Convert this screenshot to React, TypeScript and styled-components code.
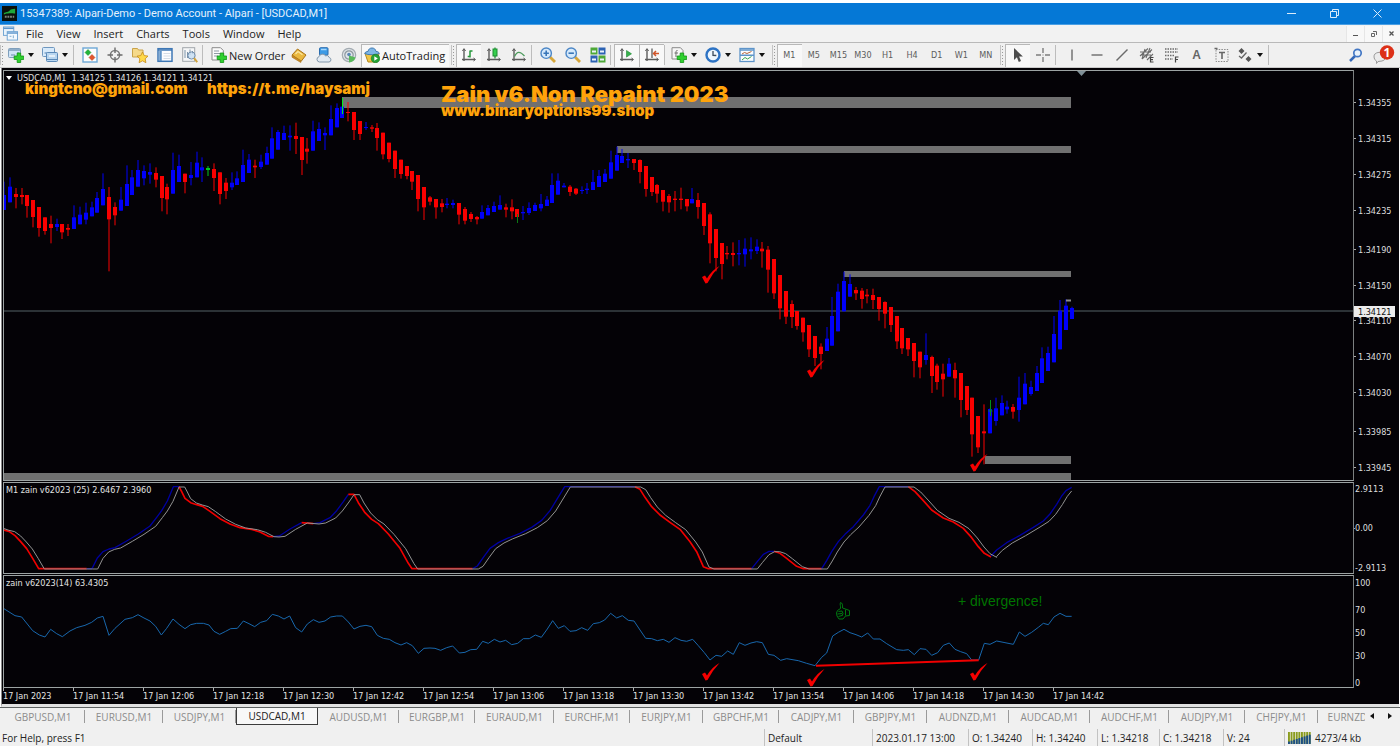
import React from "react";
import styled, { createGlobalStyle, css } from "styled-components";

const GlobalStyle = createGlobalStyle`
  * { box-sizing: border-box; }
  body { margin: 0; background: #ffffff; }
  button { font: inherit; color: inherit; border: 0; padding: 0; background: none; }
`;

const uiFont = `"Open Sans", "Noto Sans", sans-serif`;
const chartFont = `"DejaVu Sans Condensed", "Open Sans", sans-serif`;

const Window = styled.div`
  display: flex;
  flex-direction: column;
  padding-top: 3px;
  font-family: ${uiFont};
  font-size: 10px;
  color: #222222;
  overflow: hidden;
`;

const TitleBar = styled.header`
  display: flex;
  align-items: center;
  height: 22px;
  padding: 0 1px 0 2px;
  background: #0578d6;
  border-bottom: 1px solid #4a9fe4;
  color: #e4f1fc;
`;

const AppTitle = styled.h1`
  flex: 1;
  margin: 0 0 0 3px;
  font-family: Roboto, sans-serif;
  font-size: 11px;
  line-height: 14px;
  font-weight: 400;
  white-space: nowrap;
`;

const CaptionButton = styled.button`
  display: grid;
  place-items: center;
  width: 43px;
  height: 20px;
`;

const MenuBar = styled.nav`
  display: flex;
  align-items: center;
  height: 18px;
  padding-left: 3px;
  background: #f2f2f2;
  border-bottom: 1px solid #b9b9b9;
`;

const Menus = styled.div`
  display: flex;
  gap: 13px;
  padding-left: 8px;
`;

const MenuItem = styled.button`
  font-size: 11px;
  line-height: 16px;
`;

const Spacer = styled.div`
  flex: 1;
`;

const MdiButton = styled.button`
  display: grid;
  place-items: center;
  width: 18px;
  height: 16px;
  background: #f8f8f8;
  border-left: 1px solid #e6e6e6;
`;

const ToolBar = styled.div`
  display: flex;
  align-items: center;
  height: 25px;
  background: #f0f0f0;
  border-bottom: 1px solid #c9c9c9;
`;

const ToolGroup = styled.div`
  display: flex;
  align-items: center;
  height: 24px;
  padding-right: 2px;
`;

const Grip = styled.span`
  width: 5px;
  height: 20px;
  background: radial-gradient(circle, #9a9a9a 1px, transparent 1px) 0 0 / 3px 3px;
  border-left: 1px solid #c4c4c4;
`;

const Divider = styled.span`
  width: 4px;
  height: 20px;
  border-left: 1px solid #bcbcbc;
`;

const ToolButton = styled.button<{ $width?: number; $pressed?: boolean; $left?: number }>`
  display: flex;
  align-items: center;
  justify-content: ${(p) => (p.$left === undefined ? "center" : "flex-start")};
  gap: 2px;
  width: ${(p) => p.$width ?? 25}px;
  height: 23px;
  padding-left: ${(p) => p.$left ?? 0}px;
  font-size: 11px;
  white-space: nowrap;
  ${(p) =>
    p.$pressed &&
    css`
      background: #f8f8f8;
      box-shadow: inset 1px 1px 0 #b8b8b8;
    `}
`;

const Timeframes = styled.div`
  display: flex;
  width: 221px;
`;

const TimeframeButton = styled.button<{ $pressed?: boolean }>`
  flex: 1;
  height: 23px;
  font-family: ${chartFont};
  font-size: 9px;
  color: #5c5c5c;
  ${(p) =>
    p.$pressed &&
    css`
      background: #f8f8f8;
      box-shadow: inset 1px 1px 0 #b8b8b8;
    `}
`;

const LetterA = styled.span`
  font: 700 12px/14px "Liberation Sans", Arial, sans-serif;
  color: #666666;
`;

const ChartFrame = styled.main`
  display: flex;
  flex-direction: column;
  gap: 1px;
  margin: 0 1px;
  padding-top: 2px;
  background: #040206;
  border-left: 1px solid #8c8c8c;
  border-bottom: 3px solid #e2e2e2;
  font-family: ${chartFont};
  font-size: 9px;
  color: #e2e2e2;
`;

const Pane = styled.section<{ $height: number }>`
  display: flex;
  height: ${(p) => p.$height}px;
  padding-left: 1px;
`;

const Plot = styled.div`
  position: relative;
  flex: 1;
  min-width: 0;
  border: 1px solid #9da3a3;
  border-right-color: #7c8080;
  overflow: hidden;
`;

const Axis = styled.div`
  width: 45px;
`;

const Drawing = styled.svg`
  display: block;
  width: 100%;
  height: 100%;
  overflow: visible;
`;

const Legend = styled.div`
  position: absolute;
  top: 2px;
  left: 2px;
  display: flex;
  align-items: center;
  gap: 5px;
  line-height: 10px;
  white-space: pre;
`;

const Note = styled.div<{ $left: number; $top: number; $size: number }>`
  position: absolute;
  left: ${(p) => p.$left}px;
  top: ${(p) => p.$top}px;
  font: 900 ${(p) => p.$size}px/16px "Inter", "DejaVu Sans", sans-serif;
  color: #ffa30a;
  white-space: nowrap;
`;

const Signal = styled.div`
  position: absolute;
  left: 954px;
  top: 17px;
  font: 14px/16px "Liberation Sans", Arial, sans-serif;
  color: #007400;
  white-space: nowrap;
`;

const TimeAxis = styled.div`
  display: flex;
  height: 16px;
  margin-top: -1px;
  padding-left: 1px;
`;

const TimeLabel = styled.time`
  flex: 0 0 70px;
  line-height: 16px;
  white-space: nowrap;
  background: linear-gradient(#b0b0b0, #b0b0b0) 0 0 / 1px 3px no-repeat;
`;

const TabStrip = styled.div`
  display: flex;
  align-items: flex-start;
  height: 22px;
  background: #f0f0f0;
  border-top: 1px solid #5d6161;
`;

const Tabs = styled.div`
  display: flex;
  flex: 1;
  min-width: 0;
  overflow: hidden;
  padding-left: 1px;
`;

const Tab = styled.button<{ $width: number; $active?: boolean }>`
  flex: 0 0 ${(p) => p.$width}px;
  height: 17px;
  line-height: 16px;
  color: ${(p) => (p.$active ? "#222222" : "#8c8c8c")};
  font-size: 10px;
  white-space: nowrap;
  background: linear-gradient(#9a9a9a, #9a9a9a) 100% 2px / 1px 13px no-repeat;
  ${(p) =>
    p.$active &&
    css`
      background: #f8f8f8;
      border: 1px solid #3c3c3c;
      border-top: 0;
    `}
`;

const TabScroll = styled.div`
  display: flex;
  align-items: center;
  gap: 14px;
  height: 15px;
  padding: 0 8px 0 5px;
`;

const ScrollButton = styled.button`
  display: block;
  line-height: 0;
`;

const StatusBar = styled.footer`
  display: flex;
  align-items: center;
  height: 17px;
  background: #f0f0f0;
`;

const StatusText = styled.span`
  flex: 1;
  padding-left: 2px;
  white-space: nowrap;
`;

const StatusCell = styled.span<{ $width: number }>`
  display: flex;
  align-items: center;
  gap: 4px;
  width: ${(p) => p.$width}px;
  height: 17px;
  padding-left: 3px;
  border-left: 1px solid #c2c2c2;
  white-space: nowrap;
`;

/* ---------- icons ---------- */

const Icon = ({ children, size = 16 }: { children: React.ReactNode; size?: number }) => (
  <svg width={size} height={size} viewBox="0 0 16 16" fill="none" aria-hidden="true">
    {children}
  </svg>
);

const Caret = () => (
  <svg width="8" height="4" viewBox="-2 0 8 4" aria-hidden="true">
    <path d="M0 0h6L3 4z" fill="#111" />
  </svg>
);

const Plus = ({ x, y }: { x: number; y: number }) => (
  <path
    transform={`translate(${x} ${y})`}
    d="M3 0h3.500v3h3v3.500h-3v3H3v-3H0V3h3z"
    fill="#2fd02f"
    stroke="#0f9413"
    strokeWidth="0.8"
  />
);

const Bolt = () => (
  <>
    <path d="M3 2v12M1 12.5h13" stroke="#5d5d5d" strokeWidth="1.4" />
    <path d="M1.4 4 3 1.6 4.6 4M12.5 11l2 1.5-2 1.5" stroke="#5d5d5d" />
  </>
);

const icons = {
  newChart: (
    <Icon>
      <rect x="0.5" y="1.5" width="12" height="9" rx="1" fill="#cfe4f7" stroke="#7f9fbc" />
      <path d="M1 3h11" stroke="#7f9fbc" strokeWidth="1.6" />
      <path d="M3 8h4M10 5v4" stroke="#6a8dac" />
      <Plus x={6.2} y={6} />
    </Icon>
  ),
  profiles: (
    <Icon>
      <rect x="0.5" y="0.5" width="12" height="9" rx="1" fill="#d8eafa" stroke="#6f97bf" />
      <path d="M2.5 6h8" stroke="#4f7fb0" />
      <rect x="4.5" y="5.5" width="11" height="9" rx="1" fill="#b9d6f0" stroke="#5b89b8" />
      <path d="M7 9h6" stroke="#f4f9fd" strokeWidth="1.5" />
      <path d="M5 12.5h10" stroke="#5b89b8" />
    </Icon>
  ),
  marketWatch: (
    <Icon>
      <rect x="1" y="1" width="14" height="14" fill="#fdfdfd" stroke="#6da7d6" strokeWidth="1.4" />
      <path d="M6 2.500 9 5.500 6 8.500 3 5.500z" fill="#22b43a" stroke="#16882a" strokeWidth="0.5" />
      <path d="M10 13.500 13 10.500 10 7.500 7 10.500z" fill="#e2562e" stroke="#b03a1b" strokeWidth="0.5" />
    </Icon>
  ),
  dataWindow: (
    <Icon>
      <circle cx="8" cy="8" r="4.6" stroke="#7a7a7a" strokeWidth="1.5" />
      <path d="M8 0.5v5.5M8 10v5.5M0.5 8H6M10 8h5.5" stroke="#6c6c6c" strokeWidth="1.4" />
    </Icon>
  ),
  navigator: (
    <Icon>
      <path d="M0.5 3V1.5h5l1 1.5h4.5v7h-10.5z" fill="#f5d98a" stroke="#c9a24a" />
      <path
        d="m10.500 5 1.700 3.600 3.800.5-2.800 2.700.7 3.900-3.400-1.900-3.400 1.900.7-3.900-2.800-2.700 3.800-.5z"
        fill="#ffd94a"
        stroke="#c58a1a"
        strokeWidth="0.8"
      />
    </Icon>
  ),
  terminal: (
    <Icon>
      <rect x="1" y="1.700" width="14" height="12.600" fill="#fcfdff" stroke="#3e77b5" strokeWidth="1.5" />
      <path d="M1 3h14" stroke="#3e77b5" strokeWidth="1.5" />
      <path d="M3.500 4v10" stroke="#5f92c6" strokeWidth="2.500" />
      <path d="M6.500 6.500h7M6.500 9h7M6.500 11.500h7" stroke="#d5dde6" />
    </Icon>
  ),
  tester: (
    <Icon>
      <rect x="0.700" y="0.700" width="12" height="13.600" fill="#f6f7f8" stroke="#a0a5aa" />
      <path d="M3 3v8M5.500 5v6M8 2.500V8M10.500 4v3" stroke="#7d93a8" />
      <circle cx="9.500" cy="8.500" r="3.600" fill="#c6dcf1" fillOpacity="0.8" stroke="#6f8eae" />
      <path d="m12 11.200 3.300 4" stroke="#d1a33c" strokeWidth="2" />
    </Icon>
  ),
  newOrder: (
    <Icon>
      <path d="M1 0.700h8.500l2.800 2.800V13H1z" fill="#fafafa" stroke="#8b8b8b" />
      <path d="M3 4h5M3 6.500h6M3 9h4" stroke="#8f9aa5" />
      <Plus x={6.200} y={6} />
    </Icon>
  ),
  metaEditor: (
    <Icon>
      <path d="M1 8 6.500 2l8.500 6-5 6.500z" fill="#eab83f" stroke="#a8721a" />
      <path d="M1 8v2.200L9.800 15.500V13.600z" fill="#c98c24" stroke="#a8721a" strokeWidth="0.6" />
      <path d="M4.500 7 7 4.500 11.500 7.800" stroke="#fbe6a0" strokeWidth="1.3" />
    </Icon>
  ),
  vps: (
    <Icon>
      <rect x="3.500" y="0.700" width="8.500" height="7.500" rx="1" fill="#3d9be6" stroke="#2a6cae" />
      <path d="M5 2.500h5.500" stroke="#a7d6fb" strokeWidth="1.5" />
      <path
        d="M3.500 15a2.700 2.700 0 0 1-.5-5.300 3.600 3.600 0 0 1 6.500-.9 2.700 2.700 0 0 1 3.700 1.700A2.300 2.300 0 0 1 13 15z"
        fill="#e3ebf3"
        stroke="#8397ab"
      />
    </Icon>
  ),
  signals: (
    <Icon>
      <circle cx="8" cy="8" r="6.700" fill="#dfe4e8" stroke="#a3abb1" strokeWidth="1.200" />
      <circle cx="8" cy="8" r="4.200" stroke="#8d989f" strokeWidth="1.200" />
      <circle cx="8" cy="7.500" r="1.800" fill="#5a86b5" />
      <path d="M8 8.500v7a7.500 7.500 0 0 0 6.500-5z" fill="#57b95a" />
    </Icon>
  ),
  autoTrading: (
    <Icon>
      <path d="M1 6.500h14l-2 8.500H4z" fill="#f0c545" stroke="#b58a20" />
      <path
        d="M0.700 6.500C1 5 3 4.500 4 4.500 4.500 2 6 1 8 1s3.500 1 4 3.500c1.500 0 3 .5 3.300 2-3 1.700-11.600 1.700-14.600 0z"
        fill="#7db6e6"
        stroke="#3f79b0"
      />
      <circle cx="11.500" cy="11.500" r="4.300" fill="#26a336" stroke="#13731f" strokeWidth="0.600" />
      <path d="m10.300 9.200 3.500 2.300-3.500 2.300z" fill="#fff" />
    </Icon>
  ),
  bars: (
    <Icon>
      <Bolt />
      <path d="M9 3.500v7M9 4h2.500M6.700 9.500H9" stroke="#24963a" strokeWidth="1.500" />
    </Icon>
  ),
  candles: (
    <Icon>
      <Bolt />
      <path d="M9 0.500v11" stroke="#1c8b31" strokeWidth="1.200" />
      <rect x="7" y="2" width="4" height="7" fill="#35cf4d" stroke="#1c8b31" />
    </Icon>
  ),
  line: (
    <Icon>
      <Bolt />
      <path d="M3.500 9.500C6 4 9 4 13.500 9" stroke="#4c9a5c" strokeWidth="1.300" />
    </Icon>
  ),
  zoomIn: (
    <Icon>
      <path d="m10 10 5 5" stroke="#d6a63a" strokeWidth="2.800" />
      <circle cx="6.200" cy="6.200" r="5.200" fill="#d5e9fb" stroke="#4b86c6" strokeWidth="1.400" />
      <path d="M3.500 6.200h5.400M6.200 3.500v5.400" stroke="#3876b8" strokeWidth="1.600" />
    </Icon>
  ),
  zoomOut: (
    <Icon>
      <path d="m10 10 5 5" stroke="#d6a63a" strokeWidth="2.800" />
      <circle cx="6.200" cy="6.200" r="5.200" fill="#d5e9fb" stroke="#4b86c6" strokeWidth="1.400" />
      <path d="M3.500 6.200h5.400" stroke="#3876b8" strokeWidth="1.600" />
    </Icon>
  ),
  tile: (
    <Icon>
      <rect x="0.500" y="0.500" width="7" height="7" fill="#4ea838" />
      <rect x="8.500" y="0.500" width="7" height="7" fill="#2c62b3" />
      <rect x="0.500" y="8.500" width="7" height="7" fill="#2c62b3" />
      <rect x="8.500" y="8.500" width="7" height="7" fill="#4ea838" />
      <path d="M2 4.500h4M10 4.500h4M2 12.500h4M10 12.500h4" stroke="#e9f2fa" strokeWidth="2" />
    </Icon>
  ),
  autoScroll: (
    <Icon>
      <Bolt />
      <path d="m7.500 3.500 5 3.300-5 3.300z" fill="#36b24c" stroke="#1d8731" strokeWidth="0.600" />
    </Icon>
  ),
  shift: (
    <Icon>
      <Bolt />
      <path d="M8 1.500v9.500" stroke="#5d5d5d" strokeWidth="1.300" />
      <path d="M15 6.500H9.500M12 4 9.500 6.500 12 9" stroke="#d1552a" strokeWidth="1.500" />
    </Icon>
  ),
  indicators: (
    <Icon>
      <path d="M1 0.700h8.500l2.500 2.800V12H1z" fill="#f6f6f6" stroke="#8b8b8b" />
      <path d="M6.500 3.500C4.500 3 5 6 5 10M3.500 6h3.500" stroke="#6e6e6e" />
      <Plus x={6.200} y={6} />
    </Icon>
  ),
  periods: (
    <Icon>
      <circle cx="8" cy="8" r="6.500" fill="#eef6fd" stroke="#2d73c4" strokeWidth="2.400" />
      <path d="M8 4v4.300l3.300.2" stroke="#3b4b5c" strokeWidth="1.300" />
    </Icon>
  ),
  templates: (
    <Icon>
      <rect x="1" y="1.500" width="14" height="13" fill="#fbfdff" stroke="#5e94c9" strokeWidth="1.300" />
      <path d="M1 3h14M1 8.300h14" stroke="#5e94c9" strokeWidth="1.500" />
      <path d="m3 7 2.500-1.500L8 6.500l4.500-2" stroke="#b6643a" />
      <path d="m3 13 3-2.500 2.500 1.500 4-2.500" stroke="#3aa34f" />
    </Icon>
  ),
  cursor: (
    <Icon>
      <path d="M4 1v12l2.900-2.700 1.900 4.600 2.200-.9-1.900-4.500h3.800z" fill="#4c4c4c" />
    </Icon>
  ),
  crosshair: (
    <Icon>
      <path d="M8 1v5M8 10v5M1 8h5M10 8h5" stroke="#7c7c7c" strokeWidth="1.400" />
      <path d="M7.500 8h1" stroke="#7c7c7c" />
    </Icon>
  ),
  vLine: (
    <Icon>
      <path d="M8 2.500v11" stroke="#6b6b6b" strokeWidth="1.400" />
    </Icon>
  ),
  hLine: (
    <Icon>
      <path d="M2.500 8h11" stroke="#6b6b6b" strokeWidth="1.400" />
    </Icon>
  ),
  trend: (
    <Icon>
      <path d="M2.500 13.500 13.500 2.500" stroke="#6b6b6b" strokeWidth="1.400" />
    </Icon>
  ),
  channel: (
    <Icon>
      <path
        d="M1 9 9 1.500M3 12 13 2.500M1 5h11M2 8h10M8 13l6-6M6 2 3 12M11 1 7 11"
        stroke="#6b6b6b"
        strokeWidth="1.100"
      />
      <path d="M14.500 10.500H11.500v4.500h3M11.500 12.700h2.500" stroke="#444" strokeWidth="1.200" />
    </Icon>
  ),
  fibo: (
    <Icon>
      <path
        d="M1 2h13M1 5h13M1 8.500h9M1 12h8"
        stroke="#6b6b6b"
        strokeWidth="1.300"
        strokeDasharray="1.500 1"
      />
      <path d="M14.500 10H11.500v5.500M11.500 12.500h2.500" stroke="#444" strokeWidth="1.200" />
    </Icon>
  ),
  label: (
    <Icon>
      <rect x="2" y="2.500" width="12" height="12" stroke="#8a8a8a" strokeDasharray="1.500 1.200" />
      <path d="M0.500 1.500h3M5 5.500h6M8 5.500V12" stroke="#666" strokeWidth="1.600" />
    </Icon>
  ),
  arrows: (
    <Icon>
      <path d="m4.500 1 3 3-3 3-3-3zM11.500 9l3 3-3 3-3-3z" fill="#555" />
      <path d="m2 9 2.500 2L9.500 5.500" stroke="#666" strokeWidth="1.300" />
    </Icon>
  ),
};

/* ---------- chart data ---------- */

type Kind = "b" | "r" | "g";
type Candle = [Kind, number, number, number, number];

/* kind, high, body top, body bottom, low: in thirds of a pixel below the origin of each block */
const blockA: Candle[] = [
  ["b", 275, 315, 360, 360], ["b", 262, 290, 337, 337], ["r", 294, 312, 321, 355], ["r", 294, 315, 321, 343],
  ["r", 315, 315, 348, 383], ["r", 330, 330, 381, 412], ["r", 351, 351, 414, 440], ["r", 382, 382, 423, 434],
  ["r", 377, 402, 414, 460], ["b", 386, 402, 411, 423], ["r", 402, 402, 427, 447], ["r", 402, 414, 419, 438],
  ["b", 346, 382, 417, 417], ["b", 350, 374, 403, 403], ["b", 338, 368, 389, 403], ["b", 335, 352, 379, 379],
  ["b", 306, 324, 368, 368], ["b", 250, 297, 346, 346], ["r", 291, 321, 388, 544], ["r", 337, 351, 376, 406],
  ["b", 291, 329, 362, 362], ["b", 226, 282, 348, 348], ["b", 240, 262, 315, 315], ["b", 210, 240, 290, 290],
  ["b", 226, 243, 265, 286], ["b", 220, 246, 254, 281], ["r", 232, 249, 269, 292], ["r", 258, 258, 324, 364],
  ["r", 281, 291, 328, 373], ["b", 188, 240, 311, 311], ["b", 194, 228, 276, 276], ["r", 251, 251, 276, 310],
  ["b", 216, 255, 264, 286], ["b", 185, 218, 262, 262], ["b", 202, 232, 241, 276], ["g", 228, 234, 240, 258],
  ["r", 220, 237, 264, 303], ["r", 247, 247, 312, 343], ["r", 264, 278, 303, 327], ["b", 247, 278, 292, 300],
  ["b", 244, 265, 285, 285], ["b", 179, 225, 276, 276], ["b", 192, 209, 249, 249], ["r", 209, 227, 232, 264],
  ["b", 194, 215, 231, 237], ["b", 170, 189, 224, 224], ["b", 112, 145, 206, 206], ["b", 120, 126, 179, 179],
  ["b", 107, 129, 150, 150], ["b", 106, 137, 142, 182], ["r", 98, 138, 147, 192], ["r", 141, 141, 210, 255],
  ["r", 144, 176, 185, 221], ["b", 92, 124, 182, 182], ["b", 97, 117, 153, 153], ["b", 112, 129, 136, 180],
  ["b", 46, 87, 136, 136], ["b", 40, 54, 112, 112], ["b", 50, 50, 84, 84], ["r", 36, 66, 69, 94],
  ["r", 66, 66, 120, 150], ["r", 93, 93, 132, 150], ["b", 96, 111, 114, 120], ["r", 105, 112, 116, 126],
  ["r", 99, 114, 144, 182], ["r", 128, 128, 193, 208], ["r", 158, 158, 207, 217], ["r", 182, 182, 237, 264],
  ["r", 209, 209, 252, 266], ["r", 228, 228, 258, 268], ["r", 243, 243, 275, 300], ["r", 255, 255, 327, 364],
  ["r", 291, 291, 352, 390], ["r", 318, 322, 335, 346], ["r", 327, 327, 352, 386], ["r", 327, 340, 351, 367],
  ["b", 324, 341, 345, 355], ["b", 329, 339, 345, 355], ["r", 339, 339, 374, 403], ["r", 351, 357, 392, 403],
  ["r", 366, 372, 387, 396], ["r", 378, 381, 388, 403], ["b", 346, 366, 386, 386], ["b", 345, 354, 376, 376],
  ["b", 335, 348, 366, 366], ["b", 316, 345, 359, 359], ["r", 341, 352, 359, 382], ["r", 328, 352, 364, 388],
  ["r", 357, 357, 381, 381], ["b", 348, 366, 370, 390], ["b", 337, 354, 369, 375], ["b", 338, 345, 363, 363],
  ["b", 312, 342, 355, 364], ["b", 318, 329, 348, 348], ["b", 250, 285, 339, 339], ["b", 250, 272, 314, 314],
  ["b", 279, 287, 292, 292], ["r", 285, 290, 306, 318], ["r", 294, 296, 311, 315], ["b", 289, 300, 303, 312],
  ["b", 279, 296, 300, 312], ["b", 240, 276, 300, 300], ["b", 240, 258, 291, 291], ["b", 237, 251, 276, 276],
  ["b", 182, 217, 266, 266], ["b", 170, 195, 242, 242], ["b", 177, 198, 219, 219], ["b", 189, 207, 211, 234],
  ["r", 207, 207, 219, 240], ["r", 208, 210, 246, 280], ["r", 228, 228, 297, 320], ["r", 261, 261, 306, 318],
  ["r", 282, 285, 311, 338], ["r", 300, 300, 335, 364], ["r", 312, 318, 337, 368], ["r", 303, 326, 330, 364],
  ["r", 293, 326, 330, 358],
];

const blockB: Candle[] = [
  ["r", 87, 87, 109, 124], ["b", 54, 87, 100, 100], ["r", 69, 90, 111, 146], ["r", 99, 99, 168, 195],
  ["r", 127, 133, 220, 280], ["r", 177, 177, 264, 304], ["r", 219, 219, 282, 328], ["r", 228, 249, 253, 268],
  ["r", 217, 249, 255, 289], ["b", 210, 249, 253, 286], ["b", 205, 236, 253, 290], ["b", 202, 238, 244, 268],
  ["b", 208, 230, 243, 252], ["r", 216, 236, 244, 293], ["r", 228, 239, 299, 368], ["r", 267, 267, 370, 387],
  ["r", 315, 315, 415, 448], ["r", 363, 363, 440, 462], ["r", 391, 402, 441, 474], ["r", 423, 423, 468, 479],
  ["r", 443, 443, 487, 515], ["r", 465, 465, 538, 561], ["r", 498, 498, 564, 588], ["r", 520, 530, 552, 598],
  ["b", 471, 506, 543, 543], ["b", 381, 438, 527, 527], ["b", 341, 365, 484, 484], ["b", 305, 333, 424, 424],
  ["b", 313, 342, 380, 380], ["r", 351, 360, 370, 390], ["r", 354, 362, 387, 416], ["r", 357, 374, 379, 400],
  ["r", 356, 375, 390, 417], ["r", 381, 381, 417, 452], ["r", 394, 396, 431, 475], ["r", 411, 411, 465, 486],
  ["r", 438, 438, 514, 537], ["r", 474, 474, 535, 552], ["r", 504, 504, 538, 558], ["r", 519, 519, 573, 622],
  ["r", 545, 545, 592, 625], ["b", 490, 555, 570, 584], ["r", 557, 561, 618, 669], ["r", 581, 587, 636, 659],
  ["r", 581, 611, 628, 680], ["b", 564, 581, 620, 620], ["r", 578, 600, 625, 683], ["r", 609, 609, 690, 742],
  ["r", 648, 648, 720, 735], ["r", 683, 683, 793, 860], ["r", 738, 738, 832, 849], ["r", 703, 784, 790, 883],
  ["b", 715, 717, 790, 790], ["b", 683, 715, 753, 767], ["b", 676, 699, 736, 736], ["b", 692, 710, 718, 731],
  ["r", 702, 711, 725, 746], ["b", 620, 683, 720, 755], ["b", 609, 641, 703, 703], ["b", 632, 651, 672, 677],
  ["b", 588, 609, 663, 663], ["b", 532, 565, 639, 639], ["b", 530, 549, 603, 603], ["b", 438, 492, 577, 577],
  ["b", 390, 422, 538, 538], ["b", 388, 407, 480, 480], ["b", 410, 414, 447, 447],
];

const candles = [
  ...blockA.map((c) => ({ c, base: 19 })),
  ...blockB.map((c) => ({ c, base: 99 })),
];

const colours: Record<Kind, string> = { b: "#0000fa", r: "#fa0000", g: "#00c81e" };

const zones = [
  { x: 338, y: 26, h: 11 },
  { x: 613, y: 75, h: 7 },
  { x: 840, y: 200, h: 6 },
  { x: 981, y: 385, h: 8 },
  { x: 0, y: 402, h: 7 },
];

type Segment = [string, string];

const blue = "#0000a0";
const red = "#f00000";

const oscillator: Segment[] = [
  [red, "10,180 27,184 45,197 62,215 80,236 98,265 116,296 260,296"],
  [blue, "260,296 276,296 292,264 309,245 327,237 345,233 380,213 415,192 450,168 470,142 485,122 502,93 510,74 520,50 537,50"],
  [red, "537,50 545,65 555,85 572,98 590,104 608,109 630,124 660,146 690,162 720,173 755,178 780,186 805,199 820,200"],
  [blue, "820,200 838,198 870,177 905,158"],
  [red, "905,158 940,161"],
  [blue, "940,161 960,158 990,143 1010,122 1030,95 1045,73"],
  [red, "1045,73 1062,73 1075,98 1095,128 1115,148 1135,161 1165,192 1200,235 1225,280 1236,296 1418,296"],
  [blue, "1418,296 1432,288 1450,262 1470,235 1495,218 1520,206 1560,190 1595,172 1625,151 1650,122 1672,86 1694,50 1905,50"],
  [red, "1905,50 1920,58 1935,82 1955,110 1980,135 2010,157 2040,178 2070,215 2090,245 2110,290 2125,296 2255,296"],
  [blue, "2255,296 2270,277 2290,253 2307,244 2322,244"],
  [red, "2322,244 2340,250 2360,265 2390,289 2410,296 2465,296"],
  [blue, "2465,296 2480,272 2495,245 2515,215 2535,193 2560,170 2590,135 2610,106 2622,80 2638,50 2725,50"],
  [red, "2725,50 2745,65 2770,92 2795,120 2830,144 2860,156 2890,175 2915,203 2935,230 2953,250 2973,261"],
  [blue, "2973,258 2990,240 3020,218 3060,196 3100,172 3130,153 3150,132 3170,103 3185,78 3198,62 3215,52"],
];

/* the signal line follows the main line one candle later */
const signalLine = "-7,174 " + oscillator.map(([, p]) => p).join(" ").replace(" 3215,52", "");

const momentum =
  "10,415 18,420 45,437 65,441 98,482 118,495 135,501 152,478 170,491 187,500 210,483 230,473 255,466 275,457 292,444 309,439 327,496 345,475 375,448 397,443 414,434 432,444 450,453 467,469 484,495 500,475 519,447 537,463 555,476 572,464 590,460 610,460 627,465 642,484 659,493 677,484 692,476 712,475 730,453 747,461 764,470 782,457 800,452 817,433 835,438 852,447 869,438 887,473 905,486 922,462 940,449 957,457 975,453 992,441 1010,438 1027,438 1045,456 1062,477 1080,469 1098,466 1115,470 1132,496 1150,505 1168,508 1185,518 1203,525 1220,518 1237,527 1255,550 1272,535 1290,534 1305,535 1322,541 1340,533 1358,528 1378,549 1395,547 1412,539 1430,538 1448,514 1465,520 1483,508 1500,516 1517,511 1535,524 1553,520 1570,506 1588,506 1606,495 1624,502 1642,477 1658,452 1675,475 1693,467 1710,484 1728,482 1745,473 1763,481 1780,461 1798,458 1814,450 1832,430 1850,444 1867,437 1885,451 1902,453 1920,480 1937,505 1955,506 1972,512 1990,508 2007,517 2025,503 2043,511 2060,514 2078,508 2095,527 2113,548 2130,570 2148,556 2165,559 2183,543 2200,553 2218,518 2235,526 2253,519 2270,515 2287,518 2305,553 2322,556 2342,571 2360,566 2395,572 2420,580 2445,587 2465,562 2480,549 2498,498 2515,487 2532,478 2550,488 2568,494 2585,501 2603,489 2620,507 2640,507 2660,521 2690,539 2710,541 2725,539 2743,554 2760,536 2778,538 2795,556 2813,548 2830,526 2848,519 2865,538 2882,545 2900,551 2915,570 2936,570 2953,520 2970,523 2990,513 3015,518 3040,523 3058,486 3075,499 3095,487 3115,472 3130,460 3145,464 3162,441 3180,430 3198,439 3215,439";

const priceTicks: [string, number][] = [
  ["1.34355", 32], ["1.34315", 68], ["1.34275", 104], ["1.34235", 140], ["1.34190", 179], ["1.34150", 215],
  ["1.34110", 250], ["1.34070", 286], ["1.34030", 322], ["1.33985", 361], ["1.33945", 397],
];

const momentumTicks: [string, number][] = [["100", 7], ["70", 34], ["50", 57], ["30", 80], ["0", 107]];

const timeLabels = [
  "17 Jan 2023", "17 Jan 11:54", "17 Jan 12:06", "17 Jan 12:18", "17 Jan 12:30", "17 Jan 12:42", "17 Jan 12:54",
  "17 Jan 13:06", "17 Jan 13:18", "17 Jan 13:30", "17 Jan 13:42", "17 Jan 13:54", "17 Jan 14:06", "17 Jan 14:18",
  "17 Jan 14:30", "17 Jan 14:42",
];

const symbolTabs: [string, number][] = [
  ["GBPUSD", 84], ["EURUSD", 78], ["USDJPY", 73], ["USDCAD", 82], ["AUDUSD", 81], ["EURGBP", 76], ["EURAUD", 79],
  ["EURCHF", 76], ["EURJPY", 73], ["GBPCHF", 76], ["CADJPY", 75], ["GBPJPY", 73], ["AUDNZD", 82], ["AUDCAD", 81],
  ["AUDCHF", 79], ["AUDJPY", 76], ["CHFJPY", 73], ["EURNZD", 76],
];

const Check = ({ x, y }: { x: number; y: number }) => (
  <path
    transform={`translate(${x} ${y})`}
    d="M0 11 3 9.500 5 12.500Q10 4 17.500 0 10 8 5.500 17L3.500 17.500Z"
    fill="#f50000"
  />
);

const AxisLabel = ({ y, children, x = 4 }: { y: number; x?: number; children: string }) => (
  <text x={x} y={y + 4} fill="#dedede">
    {children}
  </text>
);

const PriceChart = () => (
  <Drawing role="img" aria-label="USDCAD one minute candles">
    <rect x="0" y="239" width="100%" height="2" fill="#2c3236" />
    {zones.map((z) => (
      <rect key={z.y} x={z.x} y={z.y} width={1067 - z.x} height={z.h} fill="#707070" />
    ))}
    {candles.map(({ c: [kind, high, top, bottom, low], base }, i) => {
      const x = Math.round((i * 70) / 12);
      const y = (v: number) => base + v / 3;
      return (
        <g key={i} fill={colours[kind]}>
          <rect x={x - 0.5} y={y(high)} width="1" height={(low - high) / 3} />
          <rect x={x - 2} y={y(top)} width="4" height={Math.max(1, (bottom - top) / 3)} />
        </g>
      );
    })}
    <path d="M338.500 27v16" stroke="#00f01e" />
    <path d="M513.500 143v9" stroke="#0b7a12" />
    <path d="M986.500 329v16M984.500 340h4" stroke="#00901a" />
    <path d="M1062 229.500h5" stroke="#8a8a8a" strokeWidth="2" />
    <path d="M1073 0h9l-4.500 5z" fill="#7f8f96" />
    <Check x={698} y={195} />
    <Check x={803} y={289} />
    <Check x={966} y={383} />
  </Drawing>
);

export default function App() {
  return (
    <Window>
      <GlobalStyle />
      <TitleBar>
        <svg width="15" height="15" viewBox="0 0 16 16" aria-hidden="true">
          <rect width="16" height="16" fill="#0a0f0a" />
          <path d="M2 7.500c2-1.500 4-.5 6-2.500s3-1.500 6-2v5c-3-.3-3.500-.5-6-.3S4 8 2 9z" fill="#1fa83a" />
          <path d="M3 11.500h10" stroke="#7d857d" strokeWidth="2" strokeDasharray="2 0.800" />
        </svg>
        <AppTitle>15347389: Alpari-Demo - Demo Account - Alpari - [USDCAD,M1]</AppTitle>
        <CaptionButton aria-label="Minimise">
          <svg width="10" height="10" viewBox="0 0 10 10" stroke="#dcecfa" fill="none">
            <path d="M0 4.500h9" />
          </svg>
        </CaptionButton>
        <CaptionButton aria-label="Restore">
          <svg width="9" height="9" viewBox="0 0 9 9" stroke="#dcecfa" fill="none">
            <path d="M0.500 2.500h6v6h-6zM2.500 2V0.500h6v6H7" />
          </svg>
        </CaptionButton>
        <CaptionButton aria-label="Close">
          <svg width="9" height="9" viewBox="0 0 9 9" stroke="#dcecfa" fill="none">
            <path d="m0.500 0.500 8 8M8.500 0.500l-8 8" />
          </svg>
        </CaptionButton>
      </TitleBar>

      <MenuBar aria-label="Main menu">
        <svg width="15" height="15" viewBox="0 0 16 16" fill="none" aria-hidden="true">
          <rect x="0.500" y="1" width="11" height="9" fill="#e8f3fc" stroke="#6ea3d2" />
          <path d="M0.500 2.500h11" stroke="#5b95cb" strokeWidth="1.500" />
          <rect x="4.500" y="6" width="11" height="9" fill="#f3f9fe" stroke="#6ea3d2" />
          <path d="M4.500 7.500h11" stroke="#5b95cb" strokeWidth="1.500" />
          <path d="M7 11h2M11 10v3" stroke="#7aa6cc" />
        </svg>
        <Menus>
          {["File", "View", "Insert", "Charts", "Tools", "Window", "Help"].map((m) => (
            <MenuItem key={m}>{m}</MenuItem>
          ))}
        </Menus>
        <Spacer />
        <MdiButton aria-label="Minimise chart">
          <svg width="5" height="5" viewBox="0 0 5 5" stroke="#555" fill="none">
            <path d="M0 4.500h5" />
          </svg>
        </MdiButton>
        <MdiButton aria-label="Restore chart">
          <svg width="6" height="6" viewBox="0 0 6 6" stroke="#666" fill="none">
            <path d="M0.500 2.500h3v3h-3zM2 0.500h3.500V4" />
          </svg>
        </MdiButton>
        <MdiButton aria-label="Close chart">
          <svg width="5" height="5" viewBox="0 0 5 5" stroke="#555" fill="none" strokeWidth="1.300">
            <path d="m0.500 0.500 4 4M4.500 0.500l-4 4" />
          </svg>
        </MdiButton>
      </MenuBar>

      <ToolBar role="toolbar">
        <ToolGroup>
          <Grip />
          <ToolButton $width={34} $left={3} aria-label="New chart">{icons.newChart}<Caret /></ToolButton>
          <ToolButton $width={34} $left={3} aria-label="Profiles">{icons.profiles}<Caret /></ToolButton>
          <Divider />
          <ToolButton aria-label="Market watch">{icons.marketWatch}</ToolButton>
          <ToolButton aria-label="Data window">{icons.dataWindow}</ToolButton>
          <ToolButton aria-label="Navigator">{icons.navigator}</ToolButton>
          <ToolButton aria-label="Terminal">{icons.terminal}</ToolButton>
          <ToolButton aria-label="Strategy tester">{icons.tester}</ToolButton>
          <Divider />
          <ToolButton $width={80} $left={5}>{icons.newOrder}New Order</ToolButton>
          <ToolButton aria-label="MetaEditor">{icons.metaEditor}</ToolButton>
          <ToolButton aria-label="Virtual hosting">{icons.vps}</ToolButton>
          <ToolButton aria-label="Signals">{icons.signals}</ToolButton>
          <ToolButton $width={88} $left={3} $pressed aria-pressed="true">{icons.autoTrading}AutoTrading</ToolButton>
        </ToolGroup>
        <ToolGroup>
          <Grip />
          <ToolButton $pressed aria-label="Bar chart">{icons.bars}</ToolButton>
          <ToolButton aria-label="Candlesticks">{icons.candles}</ToolButton>
          <ToolButton aria-label="Line chart">{icons.line}</ToolButton>
          <Divider />
          <ToolButton aria-label="Zoom in">{icons.zoomIn}</ToolButton>
          <ToolButton aria-label="Zoom out">{icons.zoomOut}</ToolButton>
          <ToolButton aria-label="Tile windows">{icons.tile}</ToolButton>
          <Divider />
          <ToolButton $pressed aria-label="Auto scroll">{icons.autoScroll}</ToolButton>
          <ToolButton $pressed aria-label="Chart shift">{icons.shift}</ToolButton>
          <Divider />
          <ToolButton $width={34} $left={3} aria-label="Indicators">{icons.indicators}<Caret /></ToolButton>
          <ToolButton $width={34} $left={3} aria-label="Periods">{icons.periods}<Caret /></ToolButton>
          <ToolButton $width={34} $left={3} aria-label="Templates">{icons.templates}<Caret /></ToolButton>
        </ToolGroup>
        <ToolGroup>
          <Grip />
          <Timeframes>
            {["M1", "M5", "M15", "M30", "H1", "H4", "D1", "W1", "MN"].map((t) => (
              <TimeframeButton key={t} $pressed={t === "M1"}>{t}</TimeframeButton>
            ))}
          </Timeframes>
        </ToolGroup>
        <ToolGroup>
          <Grip />
          <ToolButton $pressed aria-label="Cursor">{icons.cursor}</ToolButton>
          <ToolButton aria-label="Crosshair">{icons.crosshair}</ToolButton>
          <Divider />
          <ToolButton aria-label="Vertical line">{icons.vLine}</ToolButton>
          <ToolButton aria-label="Horizontal line">{icons.hLine}</ToolButton>
          <ToolButton aria-label="Trend line">{icons.trend}</ToolButton>
          <ToolButton aria-label="Channel">{icons.channel}</ToolButton>
          <ToolButton aria-label="Fibonacci">{icons.fibo}</ToolButton>
          <ToolButton aria-label="Text"><LetterA>A</LetterA></ToolButton>
          <ToolButton aria-label="Text label">{icons.label}</ToolButton>
          <ToolButton $width={34} $left={3} aria-label="Arrows">{icons.arrows}<Caret /></ToolButton>
          <Divider />
        </ToolGroup>
        <Spacer />
        <ToolButton aria-label="Search">
          <svg width="14" height="14" viewBox="0 0 14 14" fill="none">
            <path d="M1 13 6 8" stroke="#3468b8" strokeWidth="2.500" />
            <circle cx="8.500" cy="5" r="3.700" fill="#e9f2fb" stroke="#4377c4" strokeWidth="1.700" />
          </svg>
        </ToolButton>
        <ToolButton $width={32} aria-label="Notifications">
          <svg width="22" height="20" viewBox="0 0 22 20" fill="none">
            <path d="M1 12a6 4.500 0 1 1 8 4l-4 .5-1.500 2V16A4.500 4.500 0 0 1 1 12z" fill="#ececec" stroke="#9a9a9a" />
            <circle cx="14" cy="7.500" r="7.200" fill="#dc3018" />
            <text x="14" y="12" textAnchor="middle" fill="#fff" fontSize="12" fontWeight="700">1</text>
          </svg>
        </ToolButton>
      </ToolBar>

      <ChartFrame>
        <Pane $height={411}>
          <Plot>
            <PriceChart />
            <Legend>
              <svg width="6" height="4" viewBox="0 0 6 4" aria-hidden="true">
                <path d="M0 0h6L3 4z" fill="#fff" />
              </svg>
              <span>USDCAD,M1  1.34125 1.34126 1.34121 1.34121</span>
            </Legend>
            <Note $left={21} $top={10} $size={15}>kingtcno@gmail.com</Note>
            <Note $left={203} $top={10} $size={15}>https://t.me/haysamj</Note>
            <Note $left={437} $top={15} $size={22}>Zain v6.Non Repaint 2023</Note>
            <Note $left={437} $top={32} $size={15}>www.binaryoptions99.shop</Note>
          </Plot>
          <Axis>
            <Drawing>
              {priceTicks.map(([label, y]) => (
                <React.Fragment key={label}>
                  <path d={`M0 ${y}.500h2`} stroke="#a8a8a8" />
                  <AxisLabel y={y}>{label}</AxisLabel>
                </React.Fragment>
              ))}
              <rect x="0" y="236" width="41" height="11" fill="#ececec" />
              <text x="4" y="245" fill="#111">1.34121</text>
            </Drawing>
          </Axis>
        </Pane>

        <Pane $height={92}>
          <Plot>
            <Drawing role="img" aria-label="Oscillator">
              <g transform="translate(-4 -13) scale(0.33333)" fill="none" strokeLinejoin="round">
                {oscillator.map(([stroke, points]) => (
                  <polyline key={points} points={points} stroke={stroke} strokeWidth={stroke === red ? 5 : 4} />
                ))}
                <polyline transform="translate(17 1)" points={signalLine} stroke="#939393" strokeWidth="3" />
              </g>
            </Drawing>
            <Legend>M1 zain v62023 (25) 2.6467 2.3960</Legend>
          </Plot>
          <Axis>
            <Drawing>
              <AxisLabel x={1} y={6}>2.9113</AxisLabel>
              <path d="M0 46.500h1" stroke="#a8a8a8" />
              <AxisLabel x={1} y={45}>0.00</AxisLabel>
              <AxisLabel x={1} y={85}>-2.9113</AxisLabel>
            </Drawing>
          </Axis>
        </Pane>

        <Pane $height={113}>
          <Plot>
            <Drawing role="img" aria-label="Momentum">
              <g transform="translate(-4 -106) scale(0.33333)" fill="none">
                <polyline points={momentum} stroke="#1867ad" strokeWidth="3" />
                <path d="M2448 587 2936 571" stroke="#f00000" strokeWidth="6" />
              </g>
              <g transform="translate(832 26)" stroke="#007a10" fill="none">
                <path d="M4.500 0.500C6 0.500 7 3 6.500 6L9.500 7 13.500 8.500V13.500L9.500 14 7 17H3L1 14 0.500 11 1.500 8.500 4.500 6.500C5 4 3.500 2.500 4.500 0.500z" />
                <path d="M2.500 9.500 6 9M1.500 12 6 11.500M2.500 14.500 6 13.500M6 9 7 11.500 6 14M9.500 7.500V13.500" />
              </g>
              <Check x={698} y={87} />
              <Check x={803} y={93} />
              <Check x={966} y={87} />
            </Drawing>
            <Legend>zain v62023(14) 63.4305</Legend>
            <Signal>+ divergence!</Signal>
          </Plot>
          <Axis>
            <Drawing>
              {momentumTicks.map(([t, y]) => (
                <AxisLabel key={t} x={1} y={y}>{t}</AxisLabel>
              ))}
            </Drawing>
          </Axis>
        </Pane>

        <TimeAxis>
          {timeLabels.map((t) => (
            <TimeLabel key={t}>{t}</TimeLabel>
          ))}
        </TimeAxis>
      </ChartFrame>

      <TabStrip>
        <Tabs role="tablist">
          {symbolTabs.map(([s, w]) => (
            <Tab key={s} role="tab" $width={w} $active={s === "USDCAD"} aria-selected={s === "USDCAD"}>
              {s},M1
            </Tab>
          ))}
        </Tabs>
        <TabScroll>
          <ScrollButton aria-label="Previous tabs">
            <svg width="4" height="6" viewBox="0 0 4 6">
              <path d="M4 0v6L0 3z" fill="#111" />
            </svg>
          </ScrollButton>
          <ScrollButton aria-label="Next tabs">
            <svg width="4" height="6" viewBox="0 0 4 6">
              <path d="M0 0v6l4-3z" fill="#111" />
            </svg>
          </ScrollButton>
        </TabScroll>
      </TabStrip>

      <StatusBar>
        <StatusText>For Help, press F1</StatusText>
        <StatusCell $width={108}>Default</StatusCell>
        <StatusCell $width={96}>2023.01.17 13:00</StatusCell>
        <StatusCell $width={64}>O: 1.34240</StatusCell>
        <StatusCell $width={65}>H: 1.34240</StatusCell>
        <StatusCell $width={62}>L: 1.34218</StatusCell>
        <StatusCell $width={64}>C: 1.34218</StatusCell>
        <StatusCell $width={61}>V: 24</StatusCell>
        <StatusCell $width={116}>
          <svg width="23" height="12" viewBox="0 0 23 12" aria-hidden="true">
            {Array.from({ length: 9 }, (_, i) => (
              <g key={i}>
                <rect x={i * 2.6} y="0" width="1.900" height="12" fill="#8a9c1e" />
                <rect x={i * 2.6} y={9.5 - i * 0.85} width="1.900" height={2.5 + i * 0.85} fill="#1c4f86" />
              </g>
            ))}
          </svg>
          4273/4 kb
        </StatusCell>
      </StatusBar>
    </Window>
  );
}
